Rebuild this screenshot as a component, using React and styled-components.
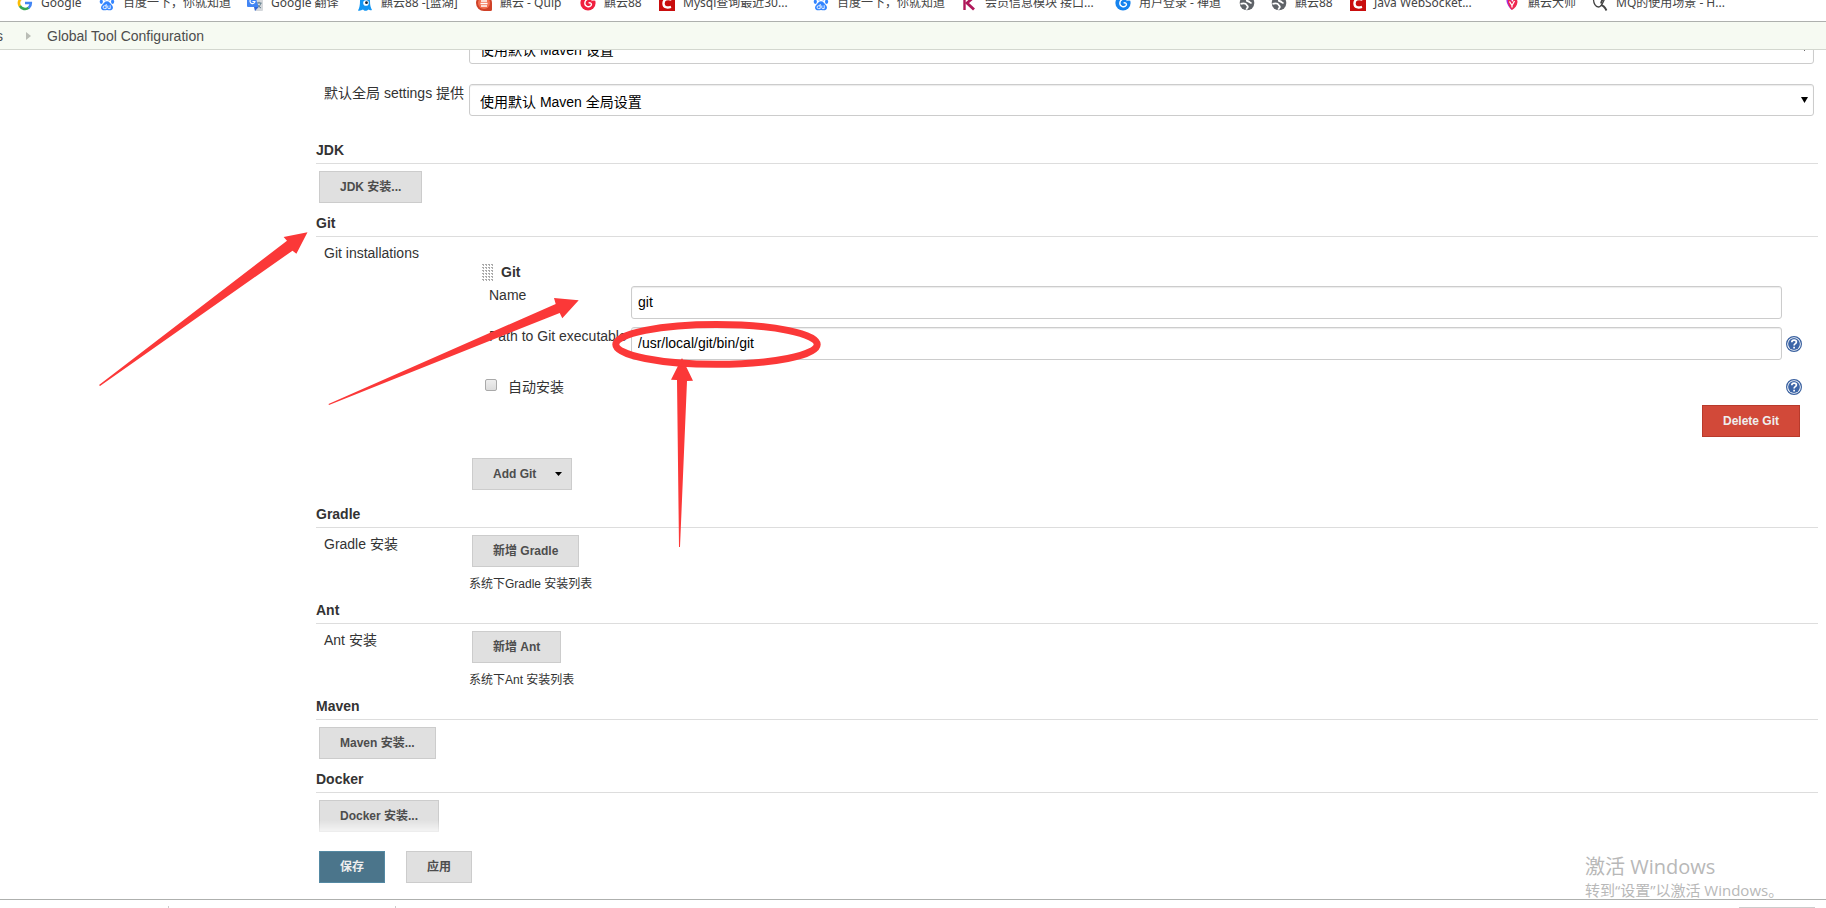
import React from "react";
import styled, { createGlobalStyle, css } from "styled-components";

const Global = createGlobalStyle`
  *, *::before, *::after { box-sizing: border-box; }
  body {
    margin: 0;
    background: #fff;
    color: #333;
    font: 14px/18px "Liberation Sans", "Noto Sans CJK SC", sans-serif;
  }
`;

const Page = styled.div`
  position: relative;
  display: flex;
  flex-direction: column;
  min-height: 100vh;
  overflow: hidden;
`;

/* ---------- browser bookmarks ---------- */

const BookmarkBar = styled.nav`
  border-bottom: 1px solid #aeb0ae;
  overflow: hidden;
`;

const BookmarkList = styled.div`
  display: flex;
  gap: 16px;
  margin-top: -5px;
  padding: 0 16px 10px 17px;
`;

const Bookmark = styled.a`
  display: flex;
  flex: none;
  gap: 8px;
  color: #444;
  font: 12px/16px "Noto Sans", "Noto Sans CJK SC", sans-serif;
  text-decoration: none;
  white-space: nowrap;

  svg { flex: none; width: 16px; height: 16px; }
`;

const BookmarkText = styled.span`
  width: ${(p) => p.$width}px;
`;

/* ---------- breadcrumbs ---------- */

const Crumbs = styled.nav`
  display: flex;
  align-items: center;
  height: 28px;
  background: #f6faf2;
  border-bottom: 1px solid #d3d7cf;
  position: relative;
`;

const Crumb = styled.a`
  color: #4d4d4d;
  text-decoration: none;
  &:first-child { margin-left: -4px; }
`;

const CrumbArrow = styled.svg`
  width: 5px;
  height: 8px;
  margin: 0 16px 0 23px;
`;

/* ---------- configuration form ---------- */

const Scroller = styled.main`
  flex: 1;
  overflow: hidden;
`;

const Form = styled.form`
  margin-top: -18px;
  padding: 0 8px 0 316px;
`;

const SettingRows = styled.div`
  display: grid;
  gap: 20px;
  margin-bottom: 24px;
`;

const Row = styled.div`
  display: grid;
  grid-template-columns: 145px 1fr;
  padding-left: 8px;
`;

const RowLabel = styled.label`
  white-space: nowrap;
`;

const SelectBox = styled.div`
  position: relative;
  margin-right: 4px;

  svg {
    position: absolute;
    right: 6px;
    top: 13px;
    width: 7px;
    height: 6px;
    pointer-events: none;
  }
`;

const field = css`
  display: block;
  width: 100%;
  border: 1px solid #ccc;
  border-radius: 3px;
  background: #fff;
  box-shadow: inset 0 1px 1px rgba(0, 0, 0, 0.08);
  color: #000;
  font: inherit;
`;

const Select = styled.select`
  ${field}
  height: 32px;
  padding: 3px 20px 0 10px;
  appearance: none;
`;

const Input = styled.input`
  ${field}
  height: 33px;
  padding: 0 6px 2px;
`;

const SectionTitle = styled.h2`
  margin: 0;
  padding-bottom: 3px;
  border-bottom: 1px solid #ddd;
  font-size: 14px;
  line-height: 20px;
  font-weight: bold;
`;

const SectionBody = styled.div`
  padding: 7px 0 10px;
`;

const tones = {
  plain: ["#e0e0e0", "#ccc", "#4d4d4d"],
  primary: ["#4b758b", "#5489a3", "#eee"],
  danger: ["#d24939", "#b83a2b", "#eee"],
};

const Button = styled.button`
  display: flex;
  align-items: center;
  gap: 19px;
  height: 32px;
  margin: 0 3px;
  padding: 0 ${(p) => (p.$menu ? "9px" : "20px")} 0 20px;
  border: 1px solid ${(p) => tones[p.$tone || "plain"][1]};
  background: ${(p) => tones[p.$tone || "plain"][0]};
  color: ${(p) => tones[p.$tone || "plain"][2]};
  font: bold 12px/18px "Liberation Sans", "Noto Sans CJK SC", sans-serif;
  white-space: nowrap;

  svg { width: 7px; height: 4px; }
`;

const Description = styled.p`
  margin: 10px 0 -1px;
  font-size: 12px;
  line-height: 14px;
`;

/* ---------- a repeatable tool block ---------- */

const Tool = styled.div`
  padding: 19px 16px 21px 0;
`;

const ToolHead = styled.div`
  display: flex;
  gap: 8px;
  margin: 0 0 5px 13px;
  font-weight: bold;

  svg { width: 11px; height: 18px; }
`;

const ToolRow = styled.div`
  display: grid;
  grid-template-columns: 142px 1fr 16px;
  column-gap: 4px;
  margin-bottom: 8px;
  padding-left: 20px;

  ${RowLabel} { margin-right: -4px; }
  ${Input} { margin-left: -4px; width: calc(100% + 4px); }
`;

const CheckRow = styled.div`
  display: flex;
  align-items: center;
  justify-content: space-between;
  margin: 18px 0 9px 16px;
`;

const CheckLabel = styled.label`
  display: flex;
  align-items: flex-start;
  gap: 11px;
`;

const Checkbox = styled.input`
  appearance: none;
  width: 12px;
  height: 12px;
  margin: 1px 0 0;
  border: 1px solid #a9a9a9;
  border-radius: 2px;
  background: linear-gradient(#eee, #dcdcdc);
`;

const HelpLink = styled.a`
  align-self: center;
  height: 16px;
  svg { display: block; width: 16px; height: 16px; }
`;

const ToolActions = styled.div`
  display: flex;
  justify-content: flex-end;
  margin-right: -1px;
`;

const AddRow = styled.div`
  padding-bottom: 4px;
`;

/* ---------- bottom of the window ---------- */

const SaveBar = styled.div`
  position: relative;
  display: flex;
  gap: 15px;
  padding: 9px 0 16px 316px;
  background: #fff;

  &::before {
    content: "";
    position: absolute;
    inset: -22px 0 auto 0;
    height: 22px;
    background: linear-gradient(rgba(255, 255, 255, 0), #fff 80%);
  }
`;

const Downloads = styled.div`
  display: flex;
  height: 9px;
  padding-top: 6px;
  border-top: 1px solid #aeb0ae;
`;

const DownloadSlot = styled.div`
  width: ${(p) => p.$width};
  border-right: 1px solid #ccc;
`;

const ShowAll = styled.div`
  width: 76px;
  margin: 1px 11px 0 auto;
  border-top: 1px solid #ccc;
`;

const Watermark = styled.div`
  position: absolute;
  right: 40px;
  bottom: 8px;
  width: 201px;
  color: #b8b8b8;
  font: 15px/20px "Open Sans", "Noto Sans CJK SC", sans-serif;
  white-space: nowrap;
  pointer-events: none;

  strong { display: block; font-weight: 400; font-size: 20px; line-height: 26px; }
`;

const Marks = styled.svg`
  position: absolute;
  left: 0;
  top: 0;
  width: 840px;
  height: 560px;
  pointer-events: none;
`;

/* ---------- drawings ---------- */

const GoogleIcon = () => (
  <svg viewBox="0 0 16 16" fill="none" strokeWidth="2.6">
    <path d="M12.2 3.8A6 6 0 0 0 3 4.9" stroke="#ea4335" />
    <path d="M3 4.7a6 6 0 0 0 0 6.6" stroke="#fbbc05" />
    <path d="M2.9 11a6 6 0 0 0 8.8 1.8" stroke="#34a853" />
    <path d="M8 8h5.8a6 6 0 0 1-2.2 4.9" stroke="#4285f4" />
  </svg>
);

const BaiduIcon = () => (
  <svg viewBox="0 0 16 16" fill="#3385ff">
    <ellipse cx="6" cy="3" rx="1.7" ry="2.4" />
    <ellipse cx="10.2" cy="3" rx="1.7" ry="2.4" />
    <ellipse cx="2.3" cy="6.8" rx="1.6" ry="2.1" />
    <ellipse cx="13.6" cy="6.8" rx="1.6" ry="2.1" />
    <path d="M8 6.3c2.400 0 3 2 4.600 3.400 2.600 2.400 1.200 5.600-1.500 5.600-1.200 0-2-.3-3.100-.3s-1.900.3-3.100.3c-2.700 0-4.100-3.200-1.500-5.600C5 8.300 5.600 6.300 8 6.300z" />
    <path d="M7.200 9v4.600H5.500a1.300 1.300 0 0 1 0-2.800h1.600M8.800 10.500v2.300c0 .6.300.8.800.8h1.600v-3.300" fill="none" stroke="#fff" strokeWidth=".9" />
  </svg>
);

const TranslateIcon = () => (
  <svg viewBox="0 0 16 16">
    <path d="M6 4h9a1 1 0 0 1 1 1v10a1 1 0 0 1-1 1H8z" fill="#d5d8dc" />
    <path d="M9.500 8h5M12 6.800V8m2 0c-.5 2-2 3.800-4 5m.5-3.500c.8 1.500 2 2.700 3.500 3.500" fill="none" stroke="#607d8b" />
    <path d="M1 0h7l3.500 12H1a1 1 0 0 1-1-1V1a1 1 0 0 1 1-1z" fill="#4285f4" />
    <path d="M11.500 12 8 16l-1-4z" fill="#3367d6" />
    <path d="M7.500 4.600A2.500 2.500 0 1 0 8 6.500H5.500" fill="none" stroke="#fff" strokeWidth="1.100" />
  </svg>
);

const LanhuIcon = () => (
  <svg viewBox="0 0 16 16">
    <path d="M3 6a5 5 0 0 1 10 0c0 4 .5 6 2 9-1.500.6-2.500.3-3.500-.5-.8 1-2 1.300-3 1.300s-1.800-.5-2.500-1.300c-1.500 1-3.500 1.500-5 1C2.500 13 3 10 3 6z" fill="#1296f3" />
    <circle cx="9" cy="8" r="2.800" fill="#fff" />
    <circle cx="9.500" cy="7.700" r="1.400" fill="#123" />
  </svg>
);

const QuipIcon = () => (
  <svg viewBox="0 0 16 16">
    <path d="M8 0a8 8 0 0 1 8 8v6.500a1.500 1.500 0 0 1-1.500 1.500H8A8 8 0 0 1 8 0z" fill="#cf4128" />
    <circle cx="8" cy="8" r="6" fill="#f27052" />
    <path d="M5 6h6M4.500 8.500h7M5 11h6" stroke="#fff" strokeWidth="1.300" />
  </svg>
);

const SwirlIcon = ({ color }) => (
  <svg viewBox="0 0 16 16">
    <circle cx="8" cy="8" r="7.600" fill={color} />
    <path d="M15 4.200C10 2.500 5 4 4.800 8.200c-.1 3.600 4.800 4.600 6.300 2.200 1-1.800-.9-3.200-2.500-2.200" fill="none" stroke="#fff" strokeWidth="1.400" />
    <path d="M15.500 5.500c-1.500-.5-3-.4-4 .2" fill="none" stroke="#fff" />
  </svg>
);

const CsdnIcon = () => (
  <svg viewBox="0 0 16 16">
    <path d="M0 0h16v16H0z" fill="#c90d0d" />
    <path d="M12.500 4.700c-4-1.400-8-.5-8 3.800s4 4.500 7.500 3.300" fill="none" stroke="#fff" strokeWidth="2.400" />
  </svg>
);

const KIcon = () => (
  <svg viewBox="0 0 16 16" fill="none" stroke="#b0175a">
    <path d="M3.500 1v14" strokeWidth="2.400" />
    <path d="M13 2 6 8l7 6.500" strokeWidth="2.800" />
  </svg>
);

const GlobeIcon = () => (
  <svg viewBox="0 0 16 16">
    <circle cx="8" cy="8" r="7.300" fill="#5f6368" />
    <path d="M1.500 8.800c3-.6 5.500-.4 6 1 .4 1.200 1.600.8 1.300 2.200-.2 1-1.300 1.200-1.300 2.700" fill="none" stroke="#fff" strokeWidth="1.800" />
    <path d="M9 3.500c-1.500 1-1.500 2.500 0 2.800 1.600.3 1.500 1.700 3.500 1.700" fill="none" stroke="#fff" strokeWidth="2" />
  </svg>
);

const VIcon = () => (
  <svg viewBox="0 0 16 16">
    <path d="M2.500 4c1-2 3-2 5 0L8 15C5 13 2 8 2.500 4z" fill="#a52be0" />
    <path d="M4 4.500c1.500-.5 3 .5 4.200 2.500L10 4c1.800-.5 3.500.5 3.500 3-.3 3.500-2.500 6.500-5.500 8C6 13 3.500 9 4 4.500z" fill="#ee2750" />
    <path d="M5.500 6.500 8 10.500 10.500 6M8 10.500v2" fill="none" stroke="#fff" strokeWidth="1.300" />
  </svg>
);

const RocketIcon = () => (
  <svg viewBox="0 0 16 16" fill="none" stroke="#444">
    <path d="M1.500 4c0 4.500 2 8 5 8s4.500-4.500 6-8" strokeWidth="1.300" />
    <path d="M13 3.500c-2 0-3.500 2.500-4 5M9 10c2.500.5 4 2.500 5.500 5.500" strokeWidth="1.800" />
  </svg>
);

const HelpIcon = () => (
  <svg viewBox="0 0 16 16">
    <circle cx="8" cy="8" r="7.400" fill="#fff" stroke="#39609f" strokeWidth="1.200" />
    <circle cx="8" cy="8" r="5.900" fill="#3d66a8" />
    <path d="M5.800 6.300c0-3 4.600-2.800 4.600-.2C10.400 7.700 8.100 7.700 8.100 9.500M8.100 10.700v1.700" fill="none" stroke="#fff" strokeWidth="1.700" />
  </svg>
);

const DragHandle = () => (
  <svg viewBox="0 0 11 18" aria-hidden="true">
    <defs>
      <pattern id="dots" width="3" height="3" patternUnits="userSpaceOnUse">
        <path d="M0 1h2v1H0zM1 2h1v1H1z" fill="#aaa" />
      </pattern>
    </defs>
    <path d="M0 0h11v18H0z" fill="url(#dots)" />
  </svg>
);

const Caret = () => (
  <svg viewBox="0 0 7 4" aria-hidden="true">
    <path d="M0 0h7L3.500 4z" fill="#000" />
  </svg>
);

const bookmarks = [
  ["Google", <GoogleIcon />, 42],
  ["百度一下，你就知道", <BaiduIcon />, 108],
  ["Google 翻译", <TranslateIcon />, 70],
  ["麒云88 -[蓝湖]", <LanhuIcon />, 79],
  ["麒云 - Quip", <QuipIcon />, 64],
  ["麒云88", <SwirlIcon color="#f0203f" />, 39],
  ["Mysql查询最近30...", <CsdnIcon />, 114],
  ["百度一下，你就知道", <BaiduIcon />, 108],
  ["会员信息模块 接口...", <KIcon />, 114],
  ["用户登录 - 禅道", <SwirlIcon color="#1683ee" />, 84],
  ["", <GlobeIcon />],
  ["麒云88", <GlobeIcon />, 39],
  ["Java WebSocket...", <CsdnIcon />, 114],
  ["麒云大师", <VIcon />, 48],
  ["MQ的使用场景 - H...", <RocketIcon />, 114],
];

function SelectField({ id, text }) {
  return (
    <SelectBox>
      <Select id={id}>
        <option>{text}</option>
      </Select>
      <svg viewBox="0 0 7 6" aria-hidden="true">
        <path d="M0 0h7L3.500 6z" fill="#000" />
      </svg>
    </SelectBox>
  );
}

function Section({ title, children }) {
  return (
    <section>
      <SectionTitle>{title}</SectionTitle>
      <SectionBody>{children}</SectionBody>
    </section>
  );
}

function Help({ topic }) {
  return (
    <HelpLink href="#help" aria-label={topic}>
      <HelpIcon />
    </HelpLink>
  );
}

export default function App() {
  return (
    <Page>
      <Global />
      <BookmarkBar>
        <BookmarkList>
          {bookmarks.map(([text, icon, width], i) => (
            <Bookmark href="#bookmark" key={i}>
              {icon}
              {text && <BookmarkText $width={width}>{text}</BookmarkText>}
            </Bookmark>
          ))}
        </BookmarkList>
      </BookmarkBar>

      <Crumbs>
        <Crumb href="#manage">s</Crumb>
        <CrumbArrow viewBox="0 0 5 8" aria-hidden="true">
          <path d="M0 0l5 4-5 4z" fill="#babdb6" />
        </CrumbArrow>
        <Crumb href="#tools">Global Tool Configuration</Crumb>
      </Crumbs>

      <Scroller>
        <Form id="config" onSubmit={(e) => e.preventDefault()}>
          <SettingRows>
            <Row>
              <RowLabel htmlFor="settings" />
              <SelectField id="settings" text="使用默认 Maven 设置" />
            </Row>
            <Row>
              <RowLabel htmlFor="global-settings">默认全局 settings 提供</RowLabel>
              <SelectField id="global-settings" text="使用默认 Maven 全局设置" />
            </Row>
          </SettingRows>

          <Section title="JDK">
            <Button type="button">JDK 安装...</Button>
          </Section>

          <Section title="Git">
            <Row>
              <span>Git installations</span>
              <div>
                <Tool>
                  <ToolHead>
                    <DragHandle />
                    Git
                  </ToolHead>
                  <ToolRow>
                    <RowLabel htmlFor="git-name">Name</RowLabel>
                    <Input id="git-name" defaultValue="git" />
                  </ToolRow>
                  <ToolRow>
                    <RowLabel htmlFor="git-path">Path to Git executable</RowLabel>
                    <Input id="git-path" defaultValue="/usr/local/git/bin/git" />
                    <Help topic="Path to Git executable" />
                  </ToolRow>
                  <CheckRow>
                    <CheckLabel>
                      <Checkbox type="checkbox" />
                      自动安装
                    </CheckLabel>
                    <Help topic="自动安装" />
                  </CheckRow>
                  <ToolActions>
                    <Button type="button" $tone="danger">Delete Git</Button>
                  </ToolActions>
                </Tool>
                <AddRow>
                  <Button type="button" $menu>
                    Add Git
                    <Caret />
                  </Button>
                </AddRow>
              </div>
            </Row>
          </Section>

          <Section title="Gradle">
            <Row>
              <span>Gradle 安装</span>
              <div>
                <Button type="button">新增 Gradle</Button>
                <Description>系统下Gradle 安装列表</Description>
              </div>
            </Row>
          </Section>

          <Section title="Ant">
            <Row>
              <span>Ant 安装</span>
              <div>
                <Button type="button">新增 Ant</Button>
                <Description>系统下Ant 安装列表</Description>
              </div>
            </Row>
          </Section>

          <Section title="Maven">
            <Button type="button">Maven 安装...</Button>
          </Section>

          <Section title="Docker">
            <Button type="button">Docker 安装...</Button>
          </Section>
        </Form>
      </Scroller>

      <SaveBar>
        <Button type="submit" form="config" $tone="primary">保存</Button>
        <Button type="button">应用</Button>
      </SaveBar>

      <Downloads>
        <DownloadSlot $width="169px" />
        <DownloadSlot $width="227px" />
        <ShowAll />
      </Downloads>

      <Watermark>
        <strong>激活 Windows</strong>
        转到“设置”以激活 Windows。
      </Watermark>

      <Marks viewBox="0 0 840 560" aria-hidden="true">
        <g fill="#fb3838">
          <path d="M99 385 287 240.700 283.600 237 307.500 232.300 296.400 253.700 292.500 250.700 100 386z" />
          <path d="M328.500 404 555.700 304 554 298 578.700 300.300 562.300 318.300 559.700 313 329 405z" />
          <path d="M679 547 677 380 671 379.700 682 358 693 380.700 687 381 680 547z" />
        </g>
        <ellipse cx="716.500" cy="344.400" rx="100.700" ry="19.900" fill="none" stroke="#fb3838" strokeWidth="7" />
      </Marks>
    </Page>
  );
}
